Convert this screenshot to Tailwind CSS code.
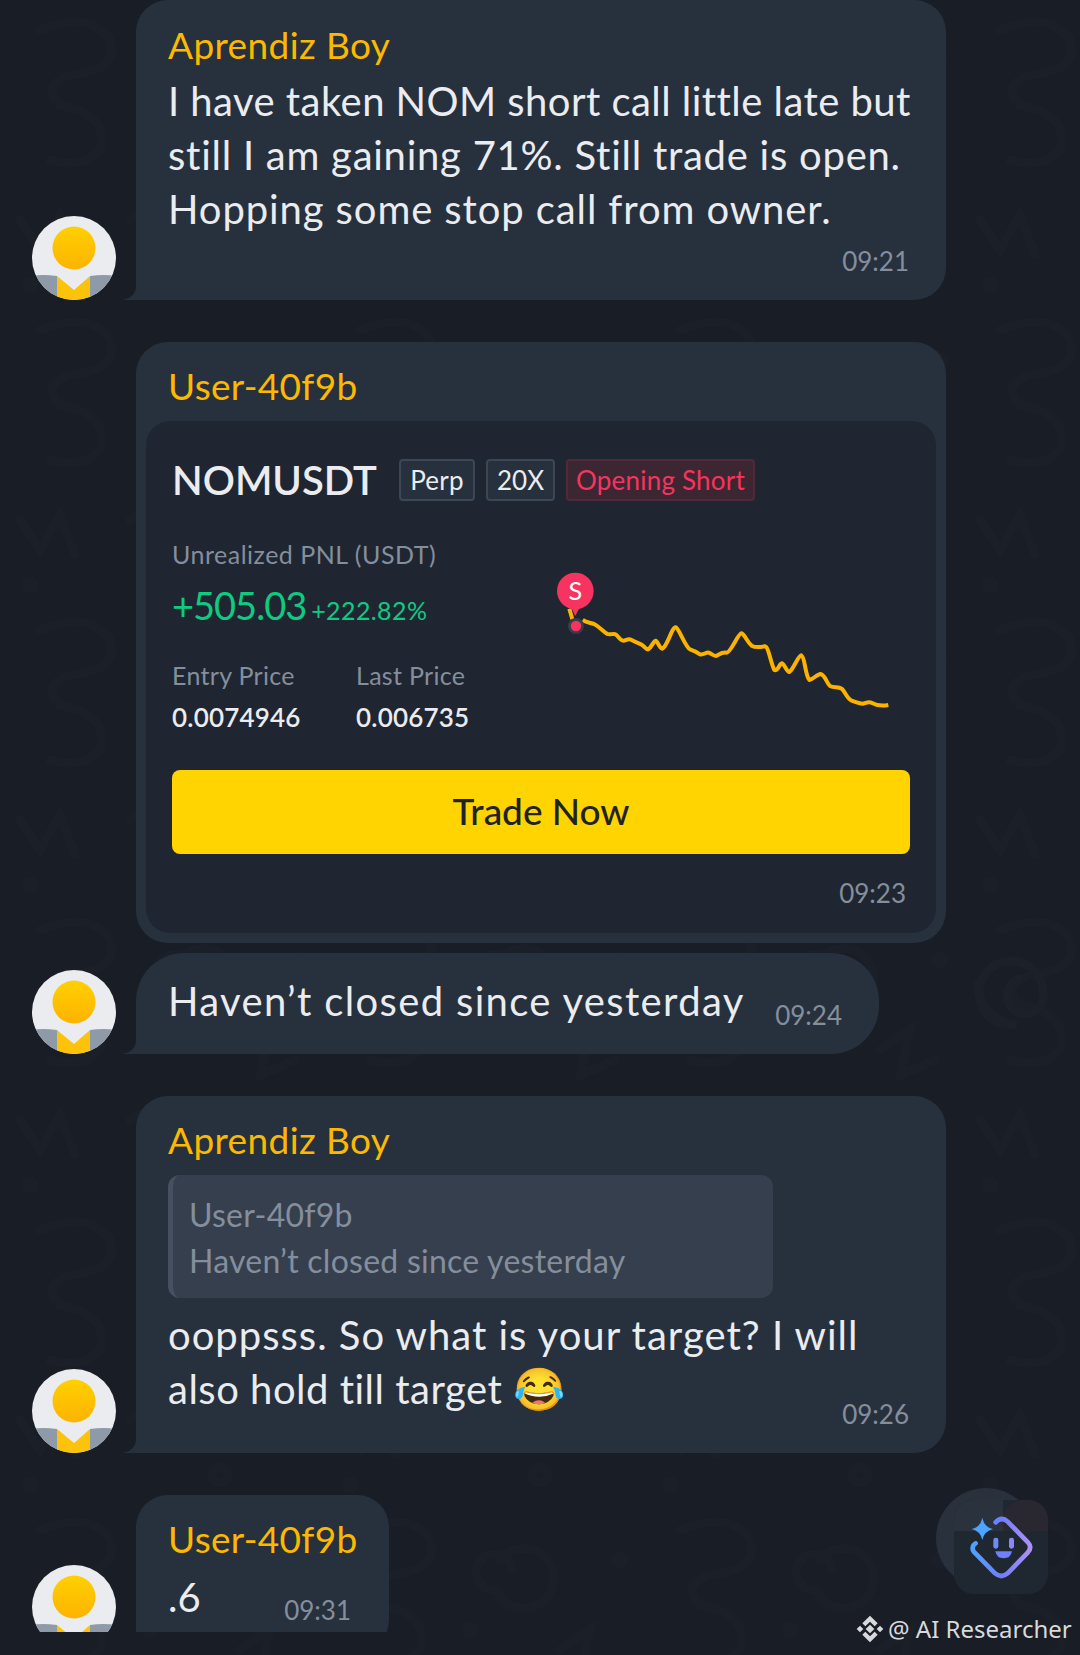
<!DOCTYPE html>
<html><head><meta charset="utf-8"><script src="https://cdn.jsdelivr.net/npm/@tailwindcss/browser@4"></script></head>
<body class="m-0 bg-[#191d26]">
<div class="w-[1080px] h-[1655px] overflow-hidden relative bg-[#191d26] font-['Lato','Noto_Sans',sans-serif] text-[#eaecef]">
 <svg class="absolute inset-0" width="1080" height="1655" fill="none">
  <defs>
   <pattern id="bgp" width="320" height="300" patternUnits="userSpaceOnUse">
    <g stroke="#1b1f28" stroke-width="8" stroke-linecap="round" fill="none">
     <path d="M40 30Q90 10 110 40Q120 70 70 75Q40 85 60 105Q110 115 100 150Q80 170 50 160"/>
     <path d="M180 60a30 30 0 1 1 -4 30a18 18 0 1 1 16 -20"/>
     <path d="M240 150L270 130L260 175L295 160"/>
     <path d="M130 220Q170 190 210 220T290 220"/>
     <path d="M20 220L40 250L60 215L75 255"/>
     <circle cx="150" cy="130" r="4"/><circle cx="300" cy="60" r="4"/><circle cx="30" cy="285" r="4"/><circle cx="220" cy="275" r="8"/>
    </g>
   </pattern>
  </defs>
  <rect width="1080" height="1655" fill="url(#bgp)"/>
  <g stroke="#1c2029" stroke-width="9" stroke-linecap="round">
   <path d="M1013 1025a32 32 0 1 1 30 -32a18 18 0 1 1 -24 -14"/>
   <path d="M1013 1025a46 46 0 0 1 -36 -40"/>
  </g>
 </svg>
 <div class="relative flex flex-col h-[1632px] overflow-hidden pl-[32px]">

  <div class="flex items-end gap-[20px] h-[300px] shrink-0">
   <svg class="w-[84px] h-[84px] shrink-0" viewBox="0 0 84 84"><defs><clipPath id="a1"><circle cx="42" cy="42" r="42"/></clipPath><linearGradient id="g1" x1="0" y1="0" x2="0" y2="1"><stop offset="0" stop-color="#ffd000"/><stop offset="1" stop-color="#fdb300"/></linearGradient></defs><g clip-path="url(#a1)"><rect width="84" height="84" fill="#eaecef"/><circle cx="42" cy="32" r="21.5" fill="url(#g1)"/><path d="M0 60Q10 58 25 60V84H0ZM58 60Q72 58 84 60V84H58Z" fill="#8e9aa8"/><path d="M25 60L42 74L58 60V84H25Z" fill="#fcc30a"/></g></svg>
   <div class="relative w-[810px] h-[300px] rounded-[32px] rounded-bl-none bg-[#27313e] pl-[32px] pt-[22px]">
    <svg class="absolute left-[-14px] bottom-0" width="20" height="16" viewBox="0 0 20 16"><path d="M14 0V3Q13 14 0 16H20V0Z" fill="#27313e"/></svg>
    <div class="relative text-[37px] leading-[46px] tracking-[0.4px] text-[#fcb900]">Aprendiz Boy</div>
    <div class="relative text-[40px] leading-[54px] mt-[6px] whitespace-nowrap"><div class="tracking-[0.45px]">I have taken NOM short call little late but</div><div class="tracking-[0.75px]">still I am gaining 71%. Still trade is open.</div><div class="tracking-[0.9px]">Hopping some stop call from owner.</div></div>
    <div class="absolute right-[37px] bottom-[23px] text-[26px] leading-[32px] text-[#848e9c]">09:21</div>
   </div>
  </div>

  <div class="mt-[42px] ml-[104px] w-[810px] h-[601px] shrink-0 rounded-[32px] bg-[#27313e] px-[10px] pt-[21px]">
   <div class="pl-[22px] text-[37px] leading-[46px] tracking-[0.3px] text-[#fcb900]">User-40f9b</div>
   <div class="mt-[12px] h-[512px] rounded-[24px] bg-[#1f2631] px-[26px] pt-[38px] relative">
    <div class="flex items-center h-[42px]">
     <span class="text-[40px] font-semibold leading-[42px] w-[227px]">NOMUSDT</span>
     <span class="w-[76px] h-[42px] text-center border-2 border-[#3c4655] rounded-[4px] bg-[#27313e] text-[26px] leading-[38px] tracking-[0.2px]">Perp</span>
     <span class="ml-[11px] w-[69px] h-[42px] text-center border-2 border-[#3c4655] rounded-[4px] bg-[#27313e] text-[26px] leading-[38px]">20X</span>
     <span class="ml-[11px] w-[189px] h-[42px] text-center border-2 border-[#50293a] rounded-[4px] bg-[#3c2632] text-[26px] leading-[38px] tracking-[0.2px] text-[#f6345f]">Opening Short</span>
    </div>
    <div class="mt-[37px] text-[25px] tracking-[0.5px] leading-[32px] text-[#848e9c]">Unrealized PNL (USDT)</div>
    <div class="mt-[9px] flex items-baseline text-[#0ecb81] h-[52px]"><span class="text-[38px] tracking-[-1px] leading-[52px]">+505.03</span><span class="ml-[5px] text-[25px] tracking-[0.4px] leading-[52px]">+222.82%</span></div>
    <div class="mt-[28px] flex">
     <div class="w-[184px]"><div class="text-[25px] tracking-[0.3px] leading-[32px] text-[#848e9c]">Entry Price</div><div class="mt-[10px] text-[26px] tracking-[0.2px] leading-[32px] font-semibold">0.0074946</div></div>
     <div><div class="text-[25px] tracking-[0.3px] leading-[32px] text-[#848e9c]">Last Price</div><div class="mt-[10px] text-[26px] tracking-[0.2px] leading-[32px] font-semibold">0.006735</div></div>
    </div>
    <div class="mt-[37px] h-[84px] rounded-[8px] bg-[#ffd400] flex items-center justify-center text-[#1e2329] text-[37px] font-medium pb-[2px]">Trade Now</div>
    <div class="absolute right-[30px] bottom-[24px] text-[26px] leading-[32px] text-[#848e9c]">09:23</div>
    <svg class="absolute left-[384px] top-[129px]" width="380" height="180" viewBox="0 0 1140 540" fill="none">
     <path d="M118 176L127 208" stroke="#fcb300" stroke-width="12"/>
     <path d="M158 210C170 218 180 218 192 222C205 228 220 245 232 252C242 256 250 248 258 254C266 260 270 272 280 272C288 272 292 266 300 268C312 274 325 280 335 284C343 288 348 300 355 298C365 292 370 273 377 272C384 275 388 295 397 296C412 290 425 232 437 232C447 234 465 290 480 298C493 302 500 306 510 313C520 316 528 306 536 308C543 310 550 318 558 318C570 312 575 306 590 308C602 308 625 250 634 250C644 252 650 275 665 287C675 293 690 292 705 289C716 290 722 340 733 360C745 365 748 338 757 340C765 345 770 365 778 366C790 358 805 316 814 316C825 320 825 375 838 390C850 388 860 373 872 372C885 374 890 400 900 408C912 414 925 410 935 416C945 424 950 445 965 452C978 456 990 462 1000 461C1010 458 1016 455 1024 458C1035 464 1050 470 1075 465" stroke="#fcb300" stroke-width="12" stroke-linejoin="round"/>
     <circle cx="138" cy="228" r="24" fill="#333d4b"/><circle cx="138" cy="228" r="16" fill="#f6345f"/>
     <path d="M122 170L136 198L150 170Z" fill="#f6345f"/><circle cx="136" cy="123" r="55" fill="#f6345f"/>
     <text x="136" y="149" text-anchor="middle" font-size="76" fill="#ffffff">S</text>
    </svg>
   </div>
  </div>

  <div class="mt-[10px] flex items-end gap-[20px] h-[101px] shrink-0">
   <svg class="w-[84px] h-[84px] shrink-0" viewBox="0 0 84 84"><g clip-path="url(#a1)"><rect width="84" height="84" fill="#eaecef"/><circle cx="42" cy="32" r="21.5" fill="url(#g1)"/><path d="M0 60Q10 58 25 60V84H0ZM58 60Q72 58 84 60V84H58Z" fill="#8e9aa8"/><path d="M25 60L42 74L58 60V84H25Z" fill="#fcc30a"/></g></svg>
   <div class="relative w-[743px] h-[101px] rounded-[48px] rounded-bl-none bg-[#27313e] pl-[32px] pt-[21px]">
    <svg class="absolute left-[-14px] bottom-0" width="20" height="16" viewBox="0 0 20 16"><path d="M14 0V3Q13 14 0 16H20V0Z" fill="#27313e"/></svg>
    <div class="relative text-[40px] leading-[54px] tracking-[1.35px] whitespace-nowrap">Haven’t closed since yesterday</div>
    <div class="absolute right-[37px] bottom-[23px] text-[26px] leading-[32px] text-[#848e9c]">09:24</div>
   </div>
  </div>

  <div class="mt-[42px] flex items-end gap-[20px] h-[357px] shrink-0">
   <svg class="w-[84px] h-[84px] shrink-0" viewBox="0 0 84 84"><g clip-path="url(#a1)"><rect width="84" height="84" fill="#eaecef"/><circle cx="42" cy="32" r="21.5" fill="url(#g1)"/><path d="M0 60Q10 58 25 60V84H0ZM58 60Q72 58 84 60V84H58Z" fill="#8e9aa8"/><path d="M25 60L42 74L58 60V84H25Z" fill="#fcc30a"/></g></svg>
   <div class="relative w-[810px] h-[357px] rounded-[32px] rounded-bl-none bg-[#27313e] pl-[32px] pt-[21px]">
    <svg class="absolute left-[-14px] bottom-0" width="20" height="16" viewBox="0 0 20 16"><path d="M14 0V3Q13 14 0 16H20V0Z" fill="#27313e"/></svg>
    <div class="relative text-[37px] leading-[46px] tracking-[0.4px] text-[#fcb900]">Aprendiz Boy</div>
    <div class="relative mt-[12px] w-[605px] h-[123px] rounded-[12px] bg-[#363f4d] border-l-[5px] border-[#475060] pl-[16px] pt-[17px] text-[#848e9c] text-[32px] leading-[46px] tracking-[0.25px]">User-40f9b<br>Haven’t closed since yesterday</div>
    <div class="relative text-[40px] leading-[54px] mt-[10px] whitespace-nowrap"><div class="tracking-[1px]">ooppsss. So what is your target? I will</div><div class="tracking-[0.5px] h-[54px]">also hold till target <span class="font-['Noto_Color_Emoji',sans-serif] text-[42px] leading-[0]">😂</span></div></div>
    <div class="absolute right-[37px] bottom-[23px] text-[26px] leading-[32px] text-[#848e9c]">09:26</div>
   </div>
  </div>

  <div class="mt-[42px] flex items-start gap-[20px] h-[157px] shrink-0">
   <svg class="mt-[70px] w-[84px] h-[84px] shrink-0" viewBox="0 0 84 84"><g clip-path="url(#a1)"><rect width="84" height="84" fill="#eaecef"/><circle cx="42" cy="32" r="21.5" fill="url(#g1)"/><path d="M0 60Q10 58 25 60V84H0ZM58 60Q72 58 84 60V84H58Z" fill="#8e9aa8"/><path d="M25 60L42 74L58 60V84H25Z" fill="#fcc30a"/></g></svg>
   <div class="relative w-[253px] h-[157px] rounded-[32px] rounded-bl-none bg-[#27313e] pl-[32px] pt-[21px]">
    <div class="text-[37px] leading-[46px] tracking-[0.3px] text-[#fcb900]">User-40f9b</div>
    <div class="text-[40px] leading-[54px] mt-[8px]">.6</div>
    <div class="absolute right-[38px] top-[99px] text-[26px] leading-[32px] text-[#848e9c]">09:31</div>
   </div>
  </div>
 </div>

 <div class="absolute left-[936px] top-[1488px] w-[100px] h-[100px] rounded-full bg-[#28313c]"></div>
 <div class="absolute left-[954px] top-[1500px] w-[94px] h-[94px] rounded-[20px] overflow-hidden bg-[#1f2731]">
  <div class="h-[31px] flex"><div class="w-[49px] bg-[#2a323d]"></div><div class="flex-1 bg-[#292831] rounded-tl-[20px]"></div></div>
 </div>
 <svg class="absolute left-[840px] top-[1470px]" width="240" height="185" viewBox="0 0 720 555" fill="none">
  <defs><linearGradient id="g2" x1="0" y1="0" x2="1" y2="0"><stop offset="0" stop-color="#4da3ff"/><stop offset="0.5" stop-color="#6f7dff"/><stop offset="1" stop-color="#ad90f5"/></linearGradient></defs>
  <path d="M427 144Q433 172 459 177Q433 183 427 210Q421 183 395 177Q421 172 427 144Z" fill="#4da3ff"/>
  <path d="M407 220C397 226 395 238 402 246L465 310Q484 326 503 310L563 248Q578 232 563 216L503 155Q485 138 467 157" stroke="url(#g2)" stroke-width="14" stroke-linecap="round"/>
  <rect x="460" y="203" width="15" height="33" rx="7" fill="#6d8bfb"/><rect x="507" y="203" width="15" height="33" rx="7" fill="#8b86fa"/>
  <path d="M466 244H516Q512 265 491 265Q470 265 466 244Z" fill="#6e80fb"/>
 </svg>
 <div class="absolute left-[856px] top-[1612px] flex items-center h-[34px] gap-[4px] font-['Noto_Sans',sans-serif] text-[24px] text-[#d8d9dc] whitespace-nowrap">
  <svg width="28" height="28" viewBox="48 435 84 84" fill="#d8d9dc"><path d="M90 437L113 460L104 469L90 455L76 469L67 460ZM90 517L113 494L104 485L90 499L76 485L67 494ZM50 477L60 467L70 477L60 487ZM110 477L120 467L130 477L120 487ZM90 464L103 477L90 490L77 477Z"/></svg>
  <span>@ AI Researcher</span>
 </div>
</div>
</body></html>
